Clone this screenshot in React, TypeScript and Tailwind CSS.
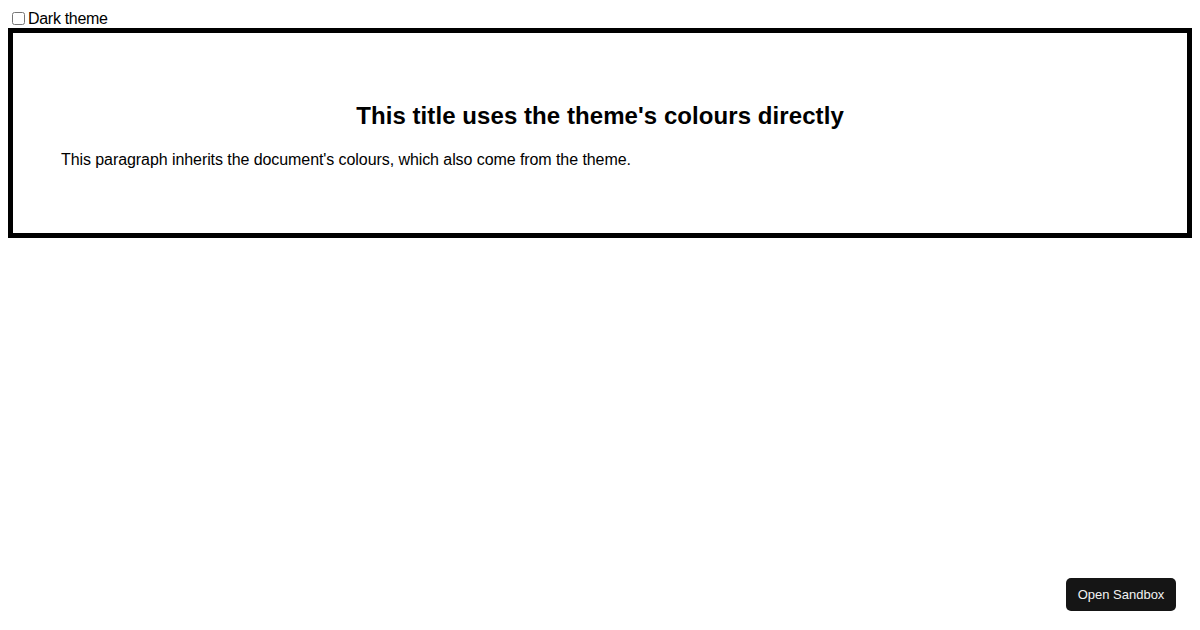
export default function App() {
  return (
    <div className="min-h-screen bg-white p-2 font-['Liberation_Sans',Arial,sans-serif] text-base text-black">
      <label className="flex h-5 items-center leading-[18px]">
        <input type="checkbox" className="m-[3px_3px_3px_4px] h-[13px] w-[13px]" />
        <span className="mt-[2px] tracking-[-0.3px]">Dark theme</span>
      </label>
      <div className="border-[5px] border-black px-12 py-[48px]">
        <h2 className="my-[21px] text-center text-2xl leading-[28px] font-bold tracking-[0.07px]">
          This title uses the theme's colours directly
        </h2>
        <p className="my-4 leading-[18px] tracking-[-0.075px]">
          This paragraph inherits the document's colours, which also come from the theme.
        </p>
      </div>
      <button className="fixed right-[24px] bottom-[19px] flex h-[33px] w-[110px] items-center justify-center rounded-[5px] bg-[#151515] text-[13px] text-[#f2f2f2]">
        Open Sandbox
      </button>
    </div>
  );
}
